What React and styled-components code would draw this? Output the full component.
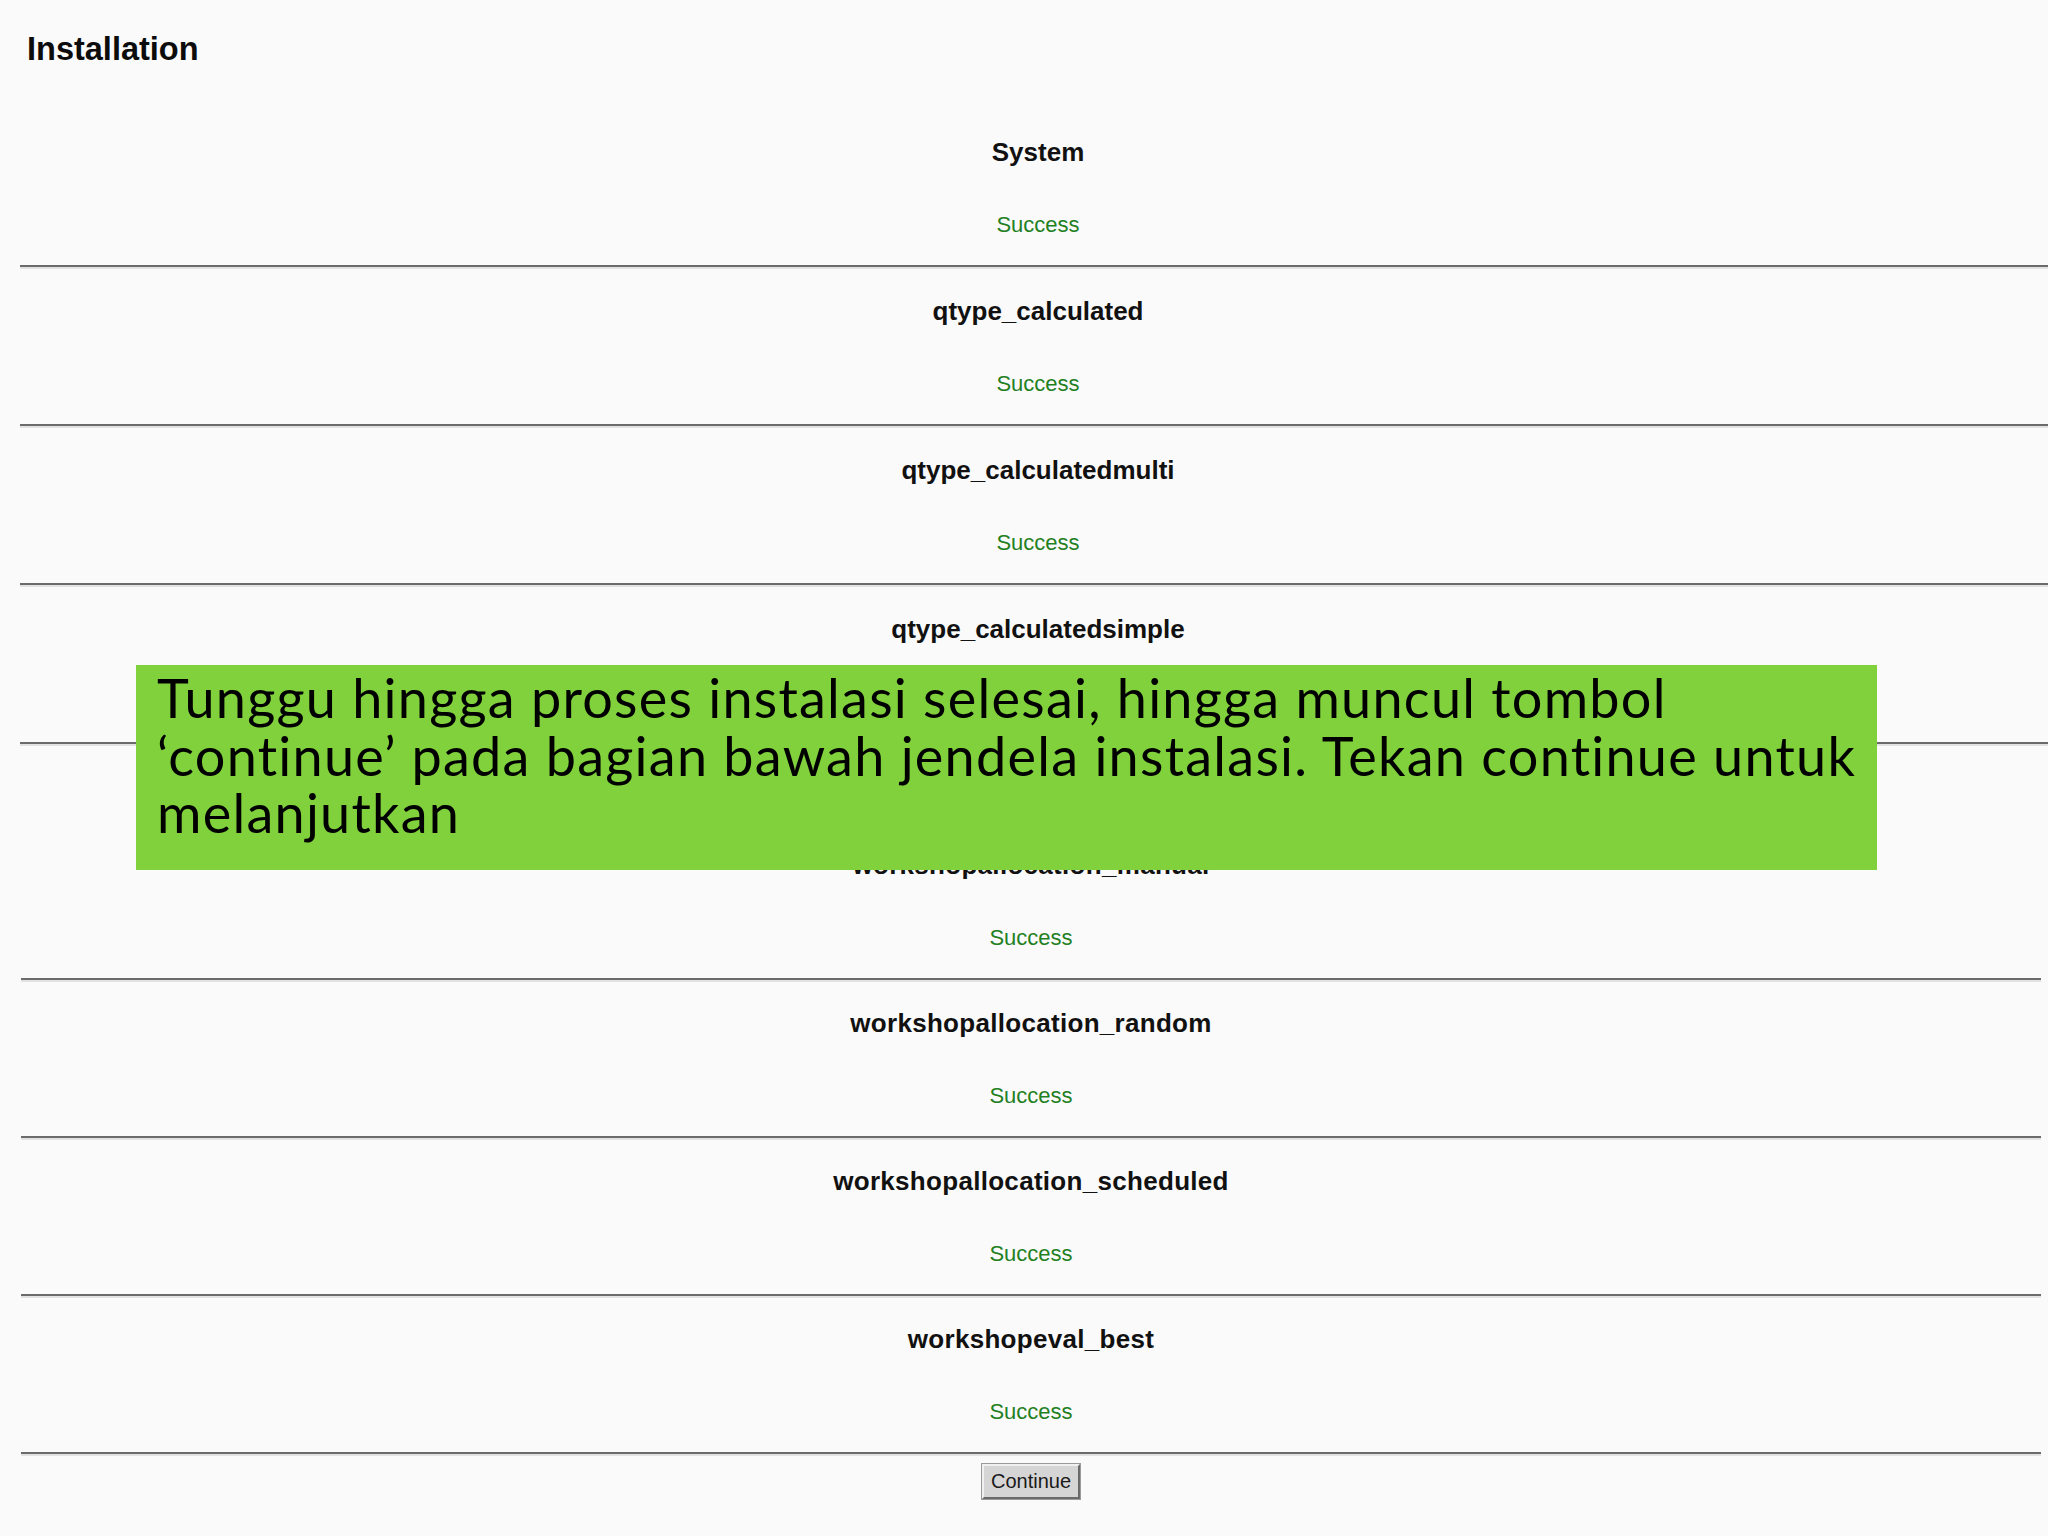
import React from "react";
import styled, { createGlobalStyle } from "styled-components";

const GlobalStyle = createGlobalStyle`
  html, body {
    margin: 0;
    padding: 0;
    background: #fafafa;
    overflow: hidden;
  }
  body {
    font-family: "Liberation Sans", Arial, sans-serif;
  }
`;

const StyledPage = styled.div`
  position: relative;
  width: 2048px;
  height: 1536px;
  overflow: hidden;
  background: #fafafa;
`;

const StyledHeading = styled.h1`
  box-sizing: border-box;
  height: 108px;
  margin: 0;
  padding: 30px 0 0 27px;
  font-size: 32.5px;
  line-height: 38px;
  font-weight: bold;
  color: #0c0c0c;
`;

const StyledSection = styled.section`
  display: flex;
  flex-direction: column;
  width: ${({ width }) => width}px;
  margin-left: ${({ left }) => left}px;
  margin-top: ${({ top }) => top || 0}px;
`;

const StyledRow = styled.div`
  box-sizing: border-box;
  display: flex;
  flex-direction: column;
  align-items: center;
  height: ${({ height }) => height}px;
  border-bottom: 2px solid #6b6b6b;
  box-shadow: 0 2px 0 #e2e2e2;
`;

const StyledName = styled.div`
  margin-top: ${({ offset }) => offset}px;
  font-size: 26px;
  line-height: 30px;
  font-weight: bold;
  color: #111;
  letter-spacing: ${({ spacing }) => spacing || 0}px;
`;

const StyledStatus = styled.div`
  margin-top: 45px;
  font-size: 22px;
  line-height: 26px;
  color: #23801f;
`;

const StyledFooter = styled.div`
  display: flex;
  justify-content: center;
  padding-top: 10px;
`;

const StyledButton = styled.button`
  box-sizing: border-box;
  width: 98px;
  height: 35px;
  padding: 0;
  font-family: "Liberation Sans", Arial, sans-serif;
  font-size: 20px;
  color: #1a1a1a;
  background: #d5d5d5;
  border: 2px solid;
  border-color: #f0f0f0 #6a6a6a #6a6a6a #f0f0f0;
  outline: 1px solid #9a9a9a;
`;

const StyledNote = styled.div`
  position: absolute;
  left: 136px;
  top: 665px;
  box-sizing: border-box;
  width: 1741px;
  height: 205px;
  padding: 4px 0 0 21px;
  background: #80d13c;
  font-family: Lato, "Open Sans", sans-serif;
  font-size: 54px;
  line-height: 57.5px;
  letter-spacing: 1.25px;
  color: #000;
  white-space: nowrap;
`;

const upper = ["System", "qtype_calculated", "qtype_calculatedmulti", "qtype_calculatedsimple"];
const lower = [
  "workshopallocation_manual",
  "workshopallocation_random",
  "workshopallocation_scheduled",
  "workshopeval_best",
];

const Result = ({ name, height, offset, spacing }) => (
  <StyledRow height={height}>
    <StyledName offset={offset} spacing={spacing}>
      {name}
    </StyledName>
    <StyledStatus>Success</StyledStatus>
  </StyledRow>
);

const App = () => (
  <>
    <GlobalStyle />
    <StyledPage>
      <StyledHeading>Installation</StyledHeading>
      <StyledSection width={2036} left={20}>
        {upper.map(name => (
          <Result key={name} name={name} height={159} offset={29} />
        ))}
      </StyledSection>
      <StyledSection width={2020} left={21} top={78}>
        {lower.map(name => (
          <Result key={name} name={name} height={158} offset={28} spacing={0.3} />
        ))}
        <StyledFooter>
          <StyledButton>Continue</StyledButton>
        </StyledFooter>
      </StyledSection>
      <StyledNote>
        Tunggu hingga proses instalasi selesai, hingga muncul tombol
        <br />
        ‘continue’ pada bagian bawah jendela instalasi. Tekan continue untuk
        <br />
        melanjutkan
      </StyledNote>
    </StyledPage>
  </>
);

export default App;
